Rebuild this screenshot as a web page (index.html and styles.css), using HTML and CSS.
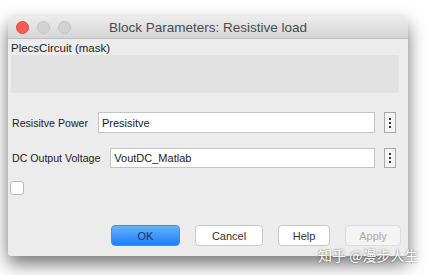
FILE: index.html
```html
<!DOCTYPE html>
<html lang="en">
<head>
    <meta charset="UTF-8">
    <meta name="viewport" content="width=device-width, initial-scale=1.0">
    <title>Block Parameters: Resistive load</title>
    <link rel="stylesheet" href="styles.css">
</head>
<body>
    <div class="window">
        <div class="titlebar">
            <div class="lights">
                <span class="light close"></span>
                <span class="light"></span>
                <span class="light"></span>
            </div>
            <div class="title">Block Parameters: Resistive load</div>
            <div></div>
        </div>

        <div class="content">
            <div class="mask-label">PlecsCircuit (mask)</div>
            <div class="mask-box"></div>

            <div class="param-row first">
                <label for="power">Resisitve Power</label>
                <input type="text" id="power" value="Presisitve">
                <span class="more"><i></i><i></i><i></i></span>
            </div>

            <div class="param-row second">
                <label for="vout">DC Output Voltage</label>
                <input type="text" id="vout" value="VoutDC_Matlab">
                <span class="more"><i></i><i></i><i></i></span>
            </div>

            <div class="check"></div>

            <div class="buttons">
                <button class="btn ok">OK</button>
                <button class="btn cancel">Cancel</button>
                <button class="btn help">Help</button>
                <button class="btn apply">Apply</button>
            </div>
        </div>
    </div>

    <div class="watermark">知乎 @漫步人生</div>
</body>
</html>
```

FILE: styles.css
```css
body {
    margin: 0;
    background: #ffffff;
    font-family: 'Liberation Sans', Arial, sans-serif;
    color: #222;
    width: 426px;
    height: 275px;
    overflow: hidden;
    position: relative;
}

.window {
    margin: 16px 0 0 8px;
    width: 400px;
    height: 240px;
    background: #ececec;
    border-radius: 5px 5px 3px 3px;
    box-shadow: 0 8px 18px rgba(0, 0, 0, 0.55);
    overflow: hidden;
}

.titlebar {
    height: 22px;
    display: grid;
    grid-template-columns: 1fr auto 1fr;
    align-items: center;
    background: linear-gradient(#ececec, #d6d6d6);
    border-bottom: 1px solid #bdbdbd;
}

.lights {
    display: flex;
    gap: 8px;
    padding-left: 8px;
}

.light {
    width: 11px;
    height: 11px;
    border-radius: 50%;
    background: #d3d3d3;
    border: 0.5px solid #c2c2c2;
}

.light.close {
    background: #fc5b57;
    border-color: #e3433f;
}

.title {
    font-size: 13.5px;
    color: #4b4b4b;
    white-space: nowrap;
}

.content {
    padding: 0 12px 0 3px;
}

.mask-label {
    margin-top: 2px;
    font-size: 11.5px;
    line-height: 14px;
    color: #222;
}

.mask-box {
    height: 38px;
    width: 388px;
    background: #e2e2e2;
    border-radius: 2px;
}

.param-row {
    display: flex;
    align-items: center;
    padding-left: 1px;
}

.param-row.first {
    margin-top: 19px;
    height: 21px;
}

.param-row.second {
    margin-top: 15px;
    height: 20px;
}

.param-row label {
    font-size: 10.6px;
    color: #222;
    margin-right: 10px;
    white-space: nowrap;
}

.param-row input {
    flex: 1;
    height: 100%;
    box-sizing: border-box;
    border: 1px solid #c4c4c4;
    background: #fff;
    font-family: 'Liberation Sans', Arial, sans-serif;
    font-size: 11px;
    color: #222;
    padding: 0 3px;
    margin: 0;
    outline: none;
}

.more {
    width: 12px;
    height: 21px;
    box-sizing: border-box;
    margin-left: 9px;
    border: 1px solid #a9a9a9;
    background: #f4f4f4;
    display: flex;
    flex-direction: column;
    align-items: center;
    justify-content: center;
    gap: 2px;
}

.param-row.second .more {
    height: 20px;
}

.more i {
    width: 2px;
    height: 2px;
    background: #333;
}

.check {
    margin: 13px 0 0 -1px;
    width: 14px;
    height: 14px;
    box-sizing: border-box;
    background: #fff;
    border: 1px solid #b8b8b8;
    border-radius: 3px;
}

.buttons {
    display: flex;
    justify-content: flex-end;
    gap: 15px;
    margin-top: 30px;
    margin-right: -5px;
}

.btn {
    height: 21px;
    box-sizing: border-box;
    border: 1px solid #c9c9c9;
    border-radius: 4px;
    background: #fff;
    font-family: 'Liberation Sans', Arial, sans-serif;
    font-size: 11px;
    color: #333;
    padding: 0;
}

.btn.ok {
    width: 69px;
    background: linear-gradient(#69b1fb, #1b7ef9);
    border-color: #3b8ef3;
    color: #16325f;
}

.btn.cancel {
    width: 68px;
}

.btn.help {
    width: 52px;
}

.btn.apply {
    width: 56px;
    background: #f4f4f4;
    border-color: #dcdcdc;
    color: #a9a9a9;
}

.watermark {
    position: absolute;
    left: 318px;
    top: 246px;
    font-family: 'Noto Sans CJK SC', sans-serif;
    font-size: 14px;
    line-height: 18px;
    color: #fff;
    text-shadow: 0 0 2px rgba(0, 0, 0, 0.6);
    white-space: nowrap;
}
```
